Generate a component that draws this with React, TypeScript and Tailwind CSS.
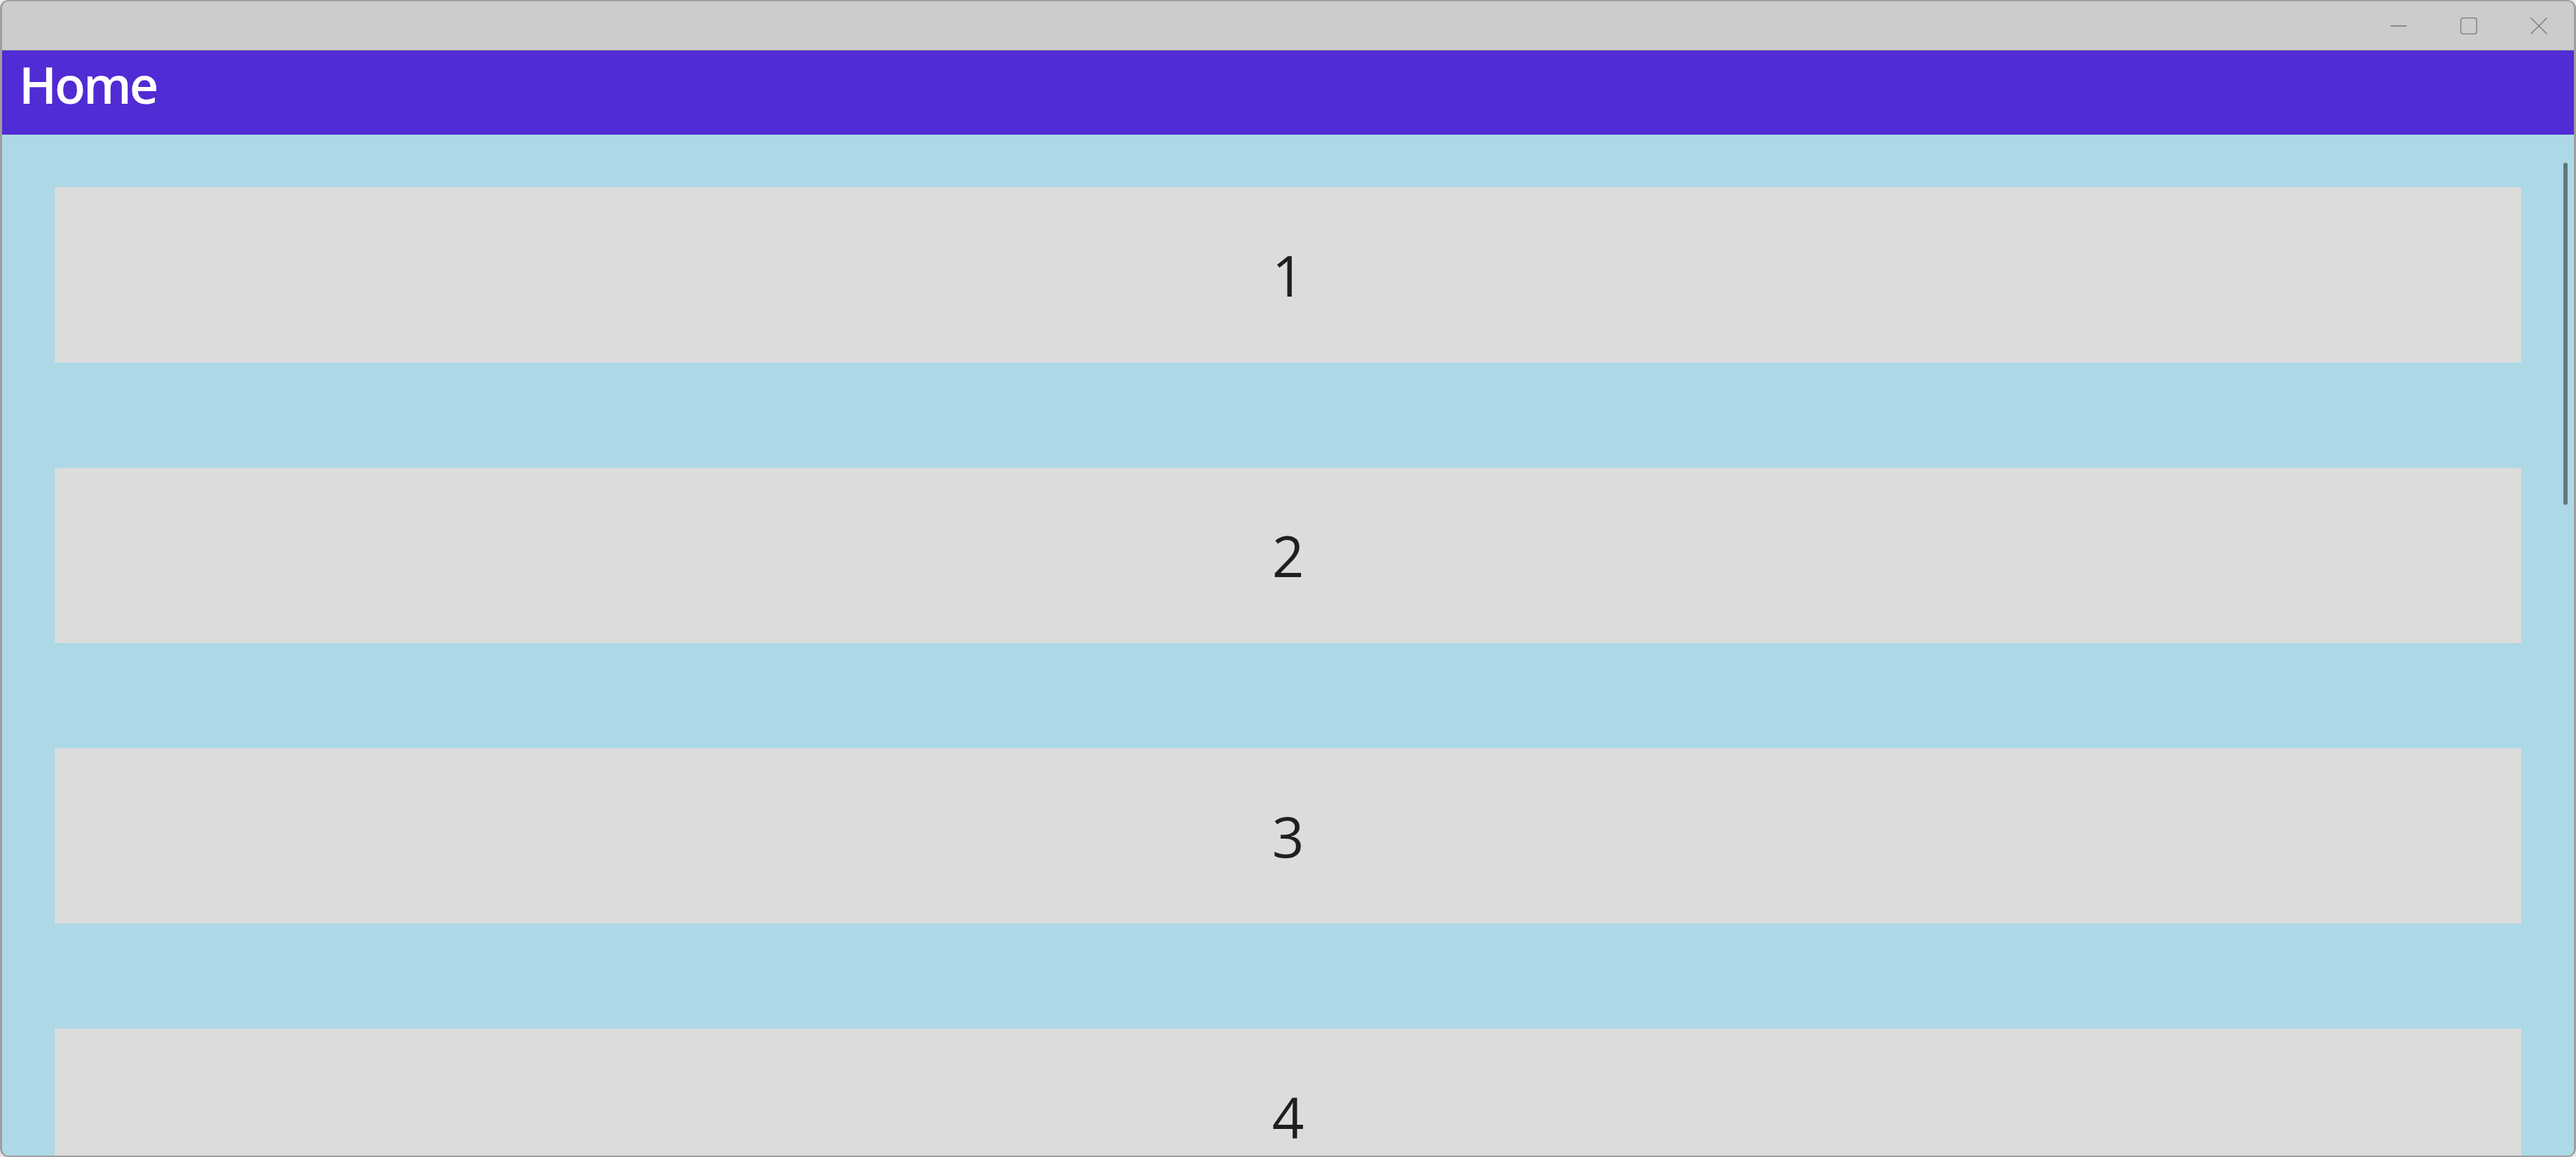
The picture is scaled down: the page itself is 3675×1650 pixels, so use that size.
const items = ['1', '2', '3', '4', '5']

function CaptionButton({ children }: { children: React.ReactNode }) {
  return (
    <button className="w-[100px] h-full flex items-center justify-center text-[#777777]">
      <svg width="24" height="24" viewBox="0 0 24 24" fill="none" stroke="currentColor" strokeWidth="1.3">
        {children}
      </svg>
    </button>
  )
}

function TitleBar() {
  return (
    <div className="h-[70px] shrink-0 flex items-center justify-end bg-[#cccccc] border-b border-[#a6a6a6]">
      <div className="flex items-center h-full">
        <CaptionButton>
          <path d="M0.5 12 H23.5" />
        </CaptionButton>
        <CaptionButton>
          <rect x="0.7" y="0.7" width="22.6" height="22.6" rx="3" />
        </CaptionButton>
        <CaptionButton>
          <path d="M0.5 0.5 L23.5 23.5 M23.5 0.5 L0.5 23.5" />
        </CaptionButton>
      </div>
    </div>
  )
}

export default function App() {
  return (
    <div className="w-[3675px] h-[1650px] bg-[#e8e8e8]">
      <div className="w-full h-full flex flex-col overflow-hidden rounded-[12px] border-x-[3px] border-t-[2px] border-b-[2px] border-[#9e9e9e]">
        <TitleBar />
        <div className="h-[120px] shrink-0 bg-[#512bd4] pl-[24px] pt-[12px]">
          <h1 className="text-[72px] leading-none font-semibold text-white tracking-[-3px] font-['Open_Sans',sans-serif]">
            Home
          </h1>
        </div>
        <div className="relative flex-1 min-h-0 overflow-hidden bg-[#add8e6]">
          <div className="flex flex-col gap-[150px] px-[75px] pt-[75px]">
            {items.map((n) => (
              <div key={n} className="h-[250px] shrink-0 flex items-center justify-center bg-[#dcdcdc]">
                <span className="text-[80px] leading-none text-[#1f1f1f] font-['Open_Sans',sans-serif]">{n}</span>
              </div>
            ))}
          </div>
          <div className="absolute right-[9px] top-[40px] w-[6px] h-[488px] rounded-full bg-[#5e7780]" />
        </div>
      </div>
    </div>
  )
}
